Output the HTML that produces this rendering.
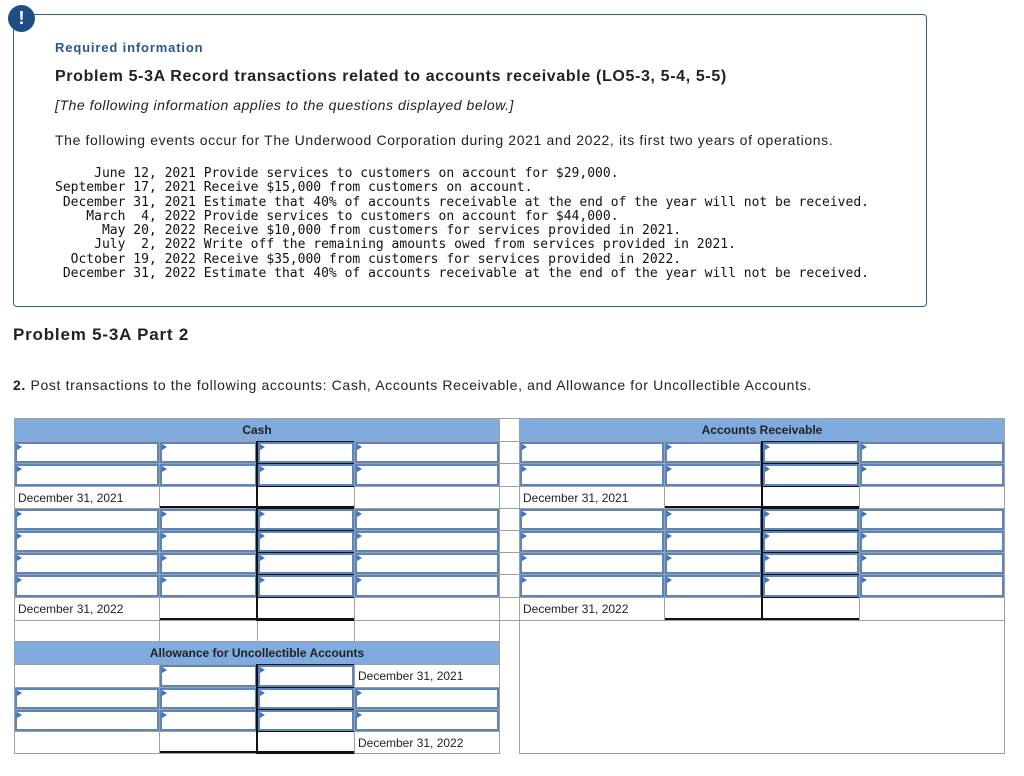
<!DOCTYPE html>
<html><head><meta charset="utf-8"><style>
*{box-sizing:border-box;margin:0;padding:0}
body{width:1024px;height:776px;background:#fff;position:relative;font-family:"Liberation Sans",Arial,sans-serif;color:#222;overflow:hidden}
.box{position:absolute;left:13px;top:14px;width:914px;height:293px;border:1px solid #2f5f95;border-radius:4px}
.ic{position:absolute;left:8px;top:5px;width:27px;height:27px;border-radius:50%;background:#1f4e85;color:#fff;font:bold 18px "Liberation Sans",sans-serif;text-align:center;line-height:27px}
.t{position:absolute;white-space:nowrap}
pre{position:absolute;left:55px;top:167px;font:13px/14.3px "DejaVu Sans Mono","Liberation Mono",monospace;color:#111}
.g{position:absolute;display:grid;background:#a0a0a0;gap:1px;padding:1px}
.g>div{background:#fff;position:relative;font-size:12px;line-height:1;display:flex;align-items:center;padding-left:3px;color:#222}
.g>div.h{background:#80abdf;justify-content:center;font-weight:bold;padding:0}
.g>div.i{border:2px solid #5b85bd}
.g>div.i:before{content:"";position:absolute;left:0;top:0;border-left:5px solid #3b74c4;border-top:3px solid transparent;border-bottom:3px solid transparent}
.g>div.k{box-shadow:-1px 0 0 1px #111}
.g>div.b{border-bottom:2px solid #111}
</style></head><body>
<div class="box"></div>
<div class="ic">!</div>
<div class="t" style="left:55px;top:40px;font-size:13px;font-weight:bold;color:#2b5591;letter-spacing:0.85px">Required information</div>
<div class="t" style="left:55px;top:68px;font-size:16px;font-weight:bold;color:#222;letter-spacing:0.64px">Problem 5-3A Record transactions related to accounts receivable (LO5-3, 5-4, 5-5)</div>
<div class="t" style="left:55px;top:97px;font-size:14px;font-style:italic;letter-spacing:0.55px">[The following information applies to the questions displayed below.]</div>
<div class="t" style="left:55px;top:132px;font-size:14px;letter-spacing:0.63px">The following events occur for The Underwood Corporation during 2021 and 2022, its first two years of operations.</div>
<pre>     June 12, 2021 Provide services to customers on account for $29,000.
September 17, 2021 Receive $15,000 from customers on account.
 December 31, 2021 Estimate that 40% of accounts receivable at the end of the year will not be received.
    March  4, 2022 Provide services to customers on account for $44,000.
      May 20, 2022 Receive $10,000 from customers for services provided in 2021.
     July  2, 2022 Write off the remaining amounts owed from services provided in 2021.
  October 19, 2022 Receive $35,000 from customers for services provided in 2022.
 December 31, 2022 Estimate that 40% of accounts receivable at the end of the year will not be received.</pre>
<div class="t" style="left:13px;top:325px;font-size:17px;font-weight:bold;letter-spacing:0.8px">Problem 5-3A Part 2</div>
<div class="t" style="left:13px;top:377px;font-size:14px;letter-spacing:0.64px"><b>2.</b> Post transactions to the following accounts: Cash, Accounts Receivable, and Allowance for Uncollectible Accounts.</div>

<div class="g" style="left:14px;top:418px;grid-template-columns:144px 97px 96px 144px;grid-template-rows:22px 21px 22px 21px 21px 21px 21px 22px 22px 21px">
<div class="h" style="grid-column:1/5">Cash</div>
<div class="i"></div><div class="i"></div><div class="i k"></div><div class="i"></div>
<div class="i"></div><div class="i"></div><div class="i k"></div><div class="i"></div>
<div>December 31, 2021</div><div class="b"></div><div class="b k"></div><div></div>
<div class="i"></div><div class="i"></div><div class="i k"></div><div class="i"></div>
<div class="i"></div><div class="i"></div><div class="i k"></div><div class="i"></div>
<div class="i"></div><div class="i"></div><div class="i k"></div><div class="i"></div>
<div class="i"></div><div class="i"></div><div class="i k"></div><div class="i"></div>
<div>December 31, 2022</div><div class="b"></div><div class="b k"></div><div></div>
<div></div><div></div><div></div><div></div>
</div>

<div class="g" style="left:499px;top:418px;grid-template-columns:19px;grid-template-rows:22px 21px 22px 21px 21px 21px 21px 22px 22px">
<div></div><div></div><div></div><div></div><div></div><div></div><div></div><div></div><div></div>
</div>
<div style="position:absolute;left:499px;top:620px;width:21px;height:134px;border-left:1px solid #a0a0a0;border-top:1px solid #a0a0a0"></div>

<div class="g" style="left:519px;top:418px;grid-template-columns:144px 97px 96px 144px;grid-template-rows:22px 21px 22px 21px 21px 21px 21px 22px 22px">
<div class="h" style="grid-column:1/5">Accounts Receivable</div>
<div class="i"></div><div class="i"></div><div class="i k"></div><div class="i"></div>
<div class="i"></div><div class="i"></div><div class="i k"></div><div class="i"></div>
<div>December 31, 2021</div><div class="b"></div><div class="b k"></div><div></div>
<div class="i"></div><div class="i"></div><div class="i k"></div><div class="i"></div>
<div class="i"></div><div class="i"></div><div class="i k"></div><div class="i"></div>
<div class="i"></div><div class="i"></div><div class="i k"></div><div class="i"></div>
<div class="i"></div><div class="i"></div><div class="i k"></div><div class="i"></div>
<div>December 31, 2022</div><div class="b"></div><div class="b k"></div><div></div>
</div>
<div style="position:absolute;left:519px;top:620px;width:486px;height:134px;border:1px solid #a0a0a0"></div>

<div class="g" style="left:14px;top:641px;grid-template-columns:144px 97px 96px 144px;grid-template-rows:22px 22px 21px 21px 21px">
<div class="h" style="grid-column:1/5">Allowance for Uncollectible Accounts</div>
<div></div><div class="i"></div><div class="i k"></div><div>December 31, 2021</div>
<div class="i"></div><div class="i"></div><div class="i k"></div><div class="i"></div>
<div class="i"></div><div class="i"></div><div class="i k"></div><div class="i"></div>
<div></div><div class="b"></div><div class="b k"></div><div>December 31, 2022</div>
</div>
</body></html>
